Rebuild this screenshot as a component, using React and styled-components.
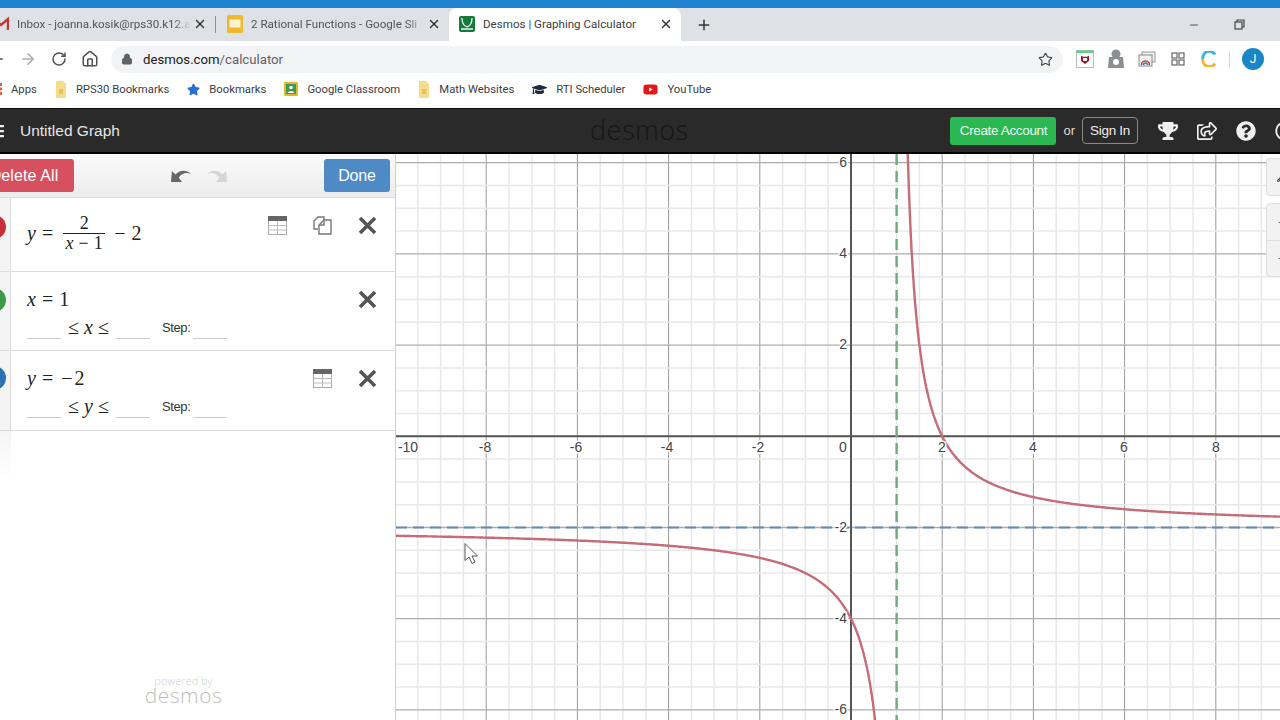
import React from "react";
import styled, { createGlobalStyle } from "styled-components";
import { ArrowLeft, ArrowRight, RotateCw, Home, Lock, Star, Plus, X, Minus } from "lucide-react";
import { FaBars, FaTrophy, FaQuestionCircle, FaRegCircle, FaStar, FaGraduationCap, FaYoutube, FaRegShareSquare, FaWrench } from "react-icons/fa";

const GlobalStyle = createGlobalStyle`
  html, body {
    margin: 0;
    padding: 0;
    background: white;
    overflow: hidden;
  }
  * {
    box-sizing: border-box;
  }
`;

const GmailIcon = () => (
  <svg width="16" height="16" viewBox="0 0 16 16">
    <path d="M1 3v11M1 3l7 6 7-6v11" fill="none" stroke="#c5392c" strokeWidth="2.4" />
  </svg>
);

const SlidesIcon = () => (
  <svg width="16" height="18" viewBox="0 0 16 18">
    <rect x="0" y="0" width="16" height="18" rx="1.5" fill="#f0b92b" />
    <rect x="2.5" y="4.5" width="11" height="8" fill="#fdf4d3" />
  </svg>
);

const DesmosIcon = () => (
  <svg width="16" height="16" viewBox="0 0 16 16">
    <rect width="16" height="16" rx="2" fill="#157a3c" />
    <path d="M3 2c0 5 2 8 5 9 3-1 5-4 5-9M2 13h12" fill="none" stroke="#e8f5ec" strokeWidth="1.3" />
  </svg>
);

const FolderIcon = () => (
  <svg width="12" height="17" viewBox="0 0 12 17">
    <path d="M1 0h7l3 3v14H1z" fill="#f6dc8a" />
    <rect x="4" y="8" width="4" height="5" fill="#e6c25f" />
  </svg>
);

const AppsIcon = () => (
  <svg width="12" height="12" viewBox="0 0 12 12" fill="#d8663c">
    <rect x="9" y="0" width="3" height="3" />
    <rect x="9" y="4.5" width="3" height="3" />
    <rect x="9" y="9" width="3" height="3" />
    <rect x="4" y="4" width="3" height="3" />
  </svg>
);

const ClassroomIcon = () => (
  <svg width="14" height="14" viewBox="0 0 14 14">
    <rect width="14" height="14" rx="1" fill="#e3b92c" />
    <rect x="2" y="2" width="10" height="10" fill="#3d9a50" />
    <circle cx="7" cy="5.5" r="1.8" fill="#fff" />
    <path d="M3.5 11c.5-2.4 6.5-2.4 7 0z" fill="#fff" />
  </svg>
);

const McAfeeIcon = () => (
  <svg width="18" height="18" viewBox="0 0 18 18">
    <rect x=".5" y=".5" width="17" height="17" fill="#fff" stroke="#bbb" />
    <rect x=".5" y=".5" width="17" height="2.5" fill="#5fd08b" />
    <path d="M5 5.5l2 1.2h4l2-1.2V11l-4 3-4-3z" fill="#a3172c" />
    <rect x="7" y="8" width="4" height="3" fill="#fff" />
  </svg>
);

const BadgeIcon = () => (
  <svg width="18" height="20" viewBox="0 0 18 20" fill="#8c8f92">
    <circle cx="9" cy="5" r="4.5" />
    <path d="M2 8h14l1 11H1z" />
    <circle cx="9" cy="13" r="3" fill="#fff" />
  </svg>
);

const CastIcon = () => (
  <svg width="18" height="16" viewBox="0 0 18 16">
    <rect x="4" y="1" width="13" height="10" fill="#eee" stroke="#999" />
    <rect x="1" y="4" width="13" height="11" fill="#f5f5f5" stroke="#888" />
    <path d="M3.5 14a4 4 0 0 1 8 0" fill="none" stroke="#d1483b" strokeWidth="1.6" />
    <path d="M5.5 14a2 2 0 0 1 4 0" fill="none" stroke="#3c7bd1" strokeWidth="1.6" />
  </svg>
);

const GridIcon = () => (
  <svg width="14" height="14" viewBox="0 0 14 14" fill="none" stroke="#666" strokeWidth="1.2">
    <rect x="1" y="1" width="5" height="5" />
    <rect x="8" y="1" width="5" height="5" />
    <rect x="1" y="8" width="5" height="5" />
    <rect x="8" y="8" width="5" height="5" />
  </svg>
);

const CIcon = () => (
  <svg width="16" height="16" viewBox="0 0 16 16" fill="none" strokeWidth="3">
    <path d="M14 3.5A6.5 6.5 0 0 0 2 8" stroke="#3cb6d8" />
    <path d="M2 8a6.5 6.5 0 0 0 12 4.5" stroke="#f2b632" />
  </svg>
);

const RestoreIcon = () => (
  <svg width="11" height="11" viewBox="0 0 11 11" fill="none" stroke="#444" strokeWidth="1.2">
    <rect x="1" y="3" width="7" height="7" />
    <path d="M3 3V1h7v7H8" />
  </svg>
);

const TableIcon = () => (
  <svg width="19" height="19" viewBox="0 0 19 19">
    <rect x=".5" y=".5" width="18" height="18" fill="#fff" stroke="#aaa" />
    <rect x="0" y="0" width="19" height="5" fill="#666" />
    <path d="M0 9.5h19M0 14h19M9.5 5v14" stroke="#bbb" />
  </svg>
);

const CopyIcon = () => (
  <svg width="19" height="20" viewBox="0 0 19 20" fill="none" stroke="#777" strokeWidth="1.4">
    <path d="M5 14H1V6l4-4h6v3" />
    <path d="M11 5h7v14H6v-9z" />
    <path d="M6 10h5V5" />
  </svg>
);

const CloseIcon = () => (
  <svg width="19" height="19" viewBox="0 0 19 19" fill="none" stroke="#555" strokeWidth="3.6">
    <path d="M2 2l15 15M17 2L2 17" />
  </svg>
);

const UndoIcon = ({ color, flip }) => (
  <svg width="20" height="14" viewBox="0 0 22 14" preserveAspectRatio="none" fill={color} style={flip ? { transform: "scaleX(-1)" } : undefined}>
    <path d="M0 13L1 2l4 3.6C9 1.5 16 0 22 5c-5.500-2-10-.6-13.500 3.400L12 13z" />
  </svg>
);

const Root = styled.div`
  width: 1280px;
  height: 720px;
  overflow: hidden;
  display: flex;
  flex-direction: column;
  font-family: "Roboto", "Liberation Sans", sans-serif;
`;

const BlueBar = styled.div`
  height: 8px;
  flex: none;
  background: #1f83d0;
`;

const TabStrip = styled.div`
  height: 33px;
  flex: none;
  display: flex;
  align-items: stretch;
  background: #dee1e6;
`;

const Tab = styled.div`
  width: 232px;
  flex: none;
  display: flex;
  align-items: center;
  padding: 0 8px 1px 10px;
  gap: 8px;
  font-size: 11.6px;
  color: ${(p) => (p.$active ? "#3c4043" : "#50555a")};
  background: ${(p) => (p.$active ? "white" : "transparent")};
  border-radius: 8px 8px 0 0;
  margin-left: ${(p) => p.$offset || 0}px;
`;

const TabTitle = styled.span`
  flex: 1;
  overflow: hidden;
  white-space: nowrap;
  ${(p) =>
    p.$fade &&
    `
    -webkit-mask-image: linear-gradient(to right, black 90%, transparent);
    mask-image: linear-gradient(to right, black 90%, transparent);
  `}
`;

const TabClose = styled.span`
  display: flex;
  flex: none;
  margin-left: -6px;
  color: #333;
`;

const TabDivider = styled.div`
  width: 1px;
  height: 17px;
  align-self: center;
  margin-right: 1px;
  flex: none;
  background: #8f9296;
`;

const NewTab = styled.div`
  display: flex;
  align-items: center;
  margin-left: 15px;
  color: #333;
`;

const WindowControls = styled.div`
  margin-left: auto;
  display: flex;
  align-items: center;
  gap: 34px;
  padding-right: 35px;
`;

const Toolbar = styled.div`
  height: 35px;
  flex: none;
  display: flex;
  align-items: center;
  background: white;
  margin-left: -19px;
`;

const NavButton = styled.div`
  width: 31px;
  flex: none;
  display: flex;
  justify-content: center;
  color: ${(p) => (p.$dim ? "#a9acb0" : "#4d5156")};
`;

const Omnibox = styled.div`
  width: 952px;
  height: 27px;
  margin-left: 6px;
  margin-top: 1px;
  flex: none;
  display: flex;
  align-items: center;
  padding: 0 10px 0 10px;
  background: #f1f3f4;
  border-radius: 14px;
`;

const Url = styled.span`
  margin-left: 10px;
  font-size: 13.2px;
  color: #202124;
  span {
    color: #5f6368;
  }
`;

const OmniStar = styled.span`
  margin-left: auto;
  display: flex;
  color: #444;
`;

const Extensions = styled.div`
  display: flex;
  align-items: center;
  flex: none;
  margin-left: 6px;
`;

const Extension = styled.div`
  width: 31px;
  display: flex;
  justify-content: center;
`;

const ToolbarSep = styled.div`
  width: 1px;
  height: 16px;
  margin: 0 12px 0 5px;
  background: #d5d7da;
`;

const Avatar = styled.div`
  width: 22px;
  height: 22px;
  border-radius: 50%;
  display: flex;
  align-items: center;
  justify-content: center;
  background: #1a86c8;
  color: white;
  font-size: 12px;
`;

const Bookmarks = styled.div`
  height: 32px;
  flex: none;
  display: flex;
  align-items: center;
  gap: 18px;
  margin-left: -10px;
  padding-bottom: 6px;
  background: white;
  font-size: 11.3px;
  color: #3c4043;
`;

const Bookmark = styled.div`
  display: flex;
  align-items: center;
  gap: 9px;
  white-space: nowrap;
`;

const Header = styled.header`
  height: 46px;
  flex: none;
  position: relative;
  display: flex;
  align-items: center;
  background: #2a2a2a;
  border-top: 1px solid #111;
  border-bottom: 2px solid #000;
  color: #eee;
`;

const Burger = styled.span`
  display: flex;
  margin-left: -11px;
  font-size: 16px;
  color: #eee;
`;

const GraphTitle = styled.span`
  margin-left: 15px;
  font-family: "Liberation Sans", sans-serif;
  font-size: 15.5px;
  color: #e6e6e6;
`;

const HeaderLogo = styled.span`
  position: absolute;
  left: 590px;
  top: 2px;
  font-family: "Open Sans", sans-serif;
  font-size: 27px;
  letter-spacing: 0.5px;
  font-weight: 300;
  color: #161616;
`;

const HeaderRight = styled.div`
  margin-left: auto;
  display: flex;
  align-items: center;
  font-family: "Liberation Sans", sans-serif;
  font-size: 13.5px;
  margin-right: -15px;
`;

const CreateButton = styled.div`
  width: 106px;
  height: 28px;
  display: flex;
  align-items: center;
  justify-content: center;
  border-radius: 3px;
  background: #2bb751;
  color: #eefaf1;
  letter-spacing: -0.35px;
`;

const Or = styled.span`
  margin: 0 7px 0 7px;
  font-size: 13px;
  color: #ddd;
`;

const SignIn = styled.div`
  width: 56px;
  height: 27px;
  display: flex;
  align-items: center;
  justify-content: center;
  border: 1px solid #888;
  border-radius: 4px;
  color: #eee;
  letter-spacing: -0.3px;
`;

const HeaderIcons = styled.div`
  display: flex;
  align-items: center;
  margin-left: 20px;
  gap: 19px;
  font-size: 20px;
  color: #efefef;
  svg {
    display: block;
  }
`;

const Main = styled.main`
  flex: 1;
  min-height: 0;
  display: flex;
`;

const Sidebar = styled.aside`
  width: 396px;
  flex: none;
  display: flex;
  flex-direction: column;
  border-right: 1px solid #cfcfcf;
  background: white;
`;

const ListTools = styled.div`
  height: 44px;
  flex: none;
  display: flex;
  align-items: center;
  padding: 0 5px 0 0;
  background: linear-gradient(#fbfbfb, #ececec);
  border-bottom: 1px solid #ddd;
  font-family: "Liberation Sans", sans-serif;
`;

const DeleteAll = styled.div`
  width: 100px;
  height: 33px;
  margin-left: -26px;
  display: flex;
  align-items: center;
  justify-content: center;
  border-radius: 3px;
  background: #d7505f;
  color: white;
  font-size: 16px;
  letter-spacing: 0.1px;
`;

const History = styled.div`
  display: flex;
  align-items: center;
  gap: 16px;
  margin-left: 97px;
`;

const DoneButton = styled.div`
  width: 66px;
  height: 33px;
  margin-left: auto;
  display: flex;
  align-items: center;
  justify-content: center;
  border-radius: 3px;
  background: #4e8ac6;
  color: white;
  font-size: 16px;
  letter-spacing: -0.2px;
`;

const ExprRow = styled.div`
  height: ${(p) => p.$height}px;
  flex: none;
  display: flex;
  border-bottom: 1px solid #ddd;
`;

const Gutter = styled.div`
  width: 11px;
  flex: none;
  overflow: hidden;
  background: #f4f4f4;
  border-right: 1px solid #ddd;
`;

const FadedGutter = styled.div`
  width: 11px;
  flex: none;
  background: linear-gradient(#f5f5f5, white);
`;

const Dot = styled.div`
  width: 24px;
  height: 24px;
  margin: ${(p) => p.$top}px 0 0 -18px;
  border-radius: 50%;
  background: ${(p) => p.$color};
`;

const ExprBody = styled.div`
  flex: 1;
  display: flex;
  flex-direction: column;
  padding: ${(p) => p.$top}px 18px 0 16px;
`;

const ExprLine = styled.div`
  display: flex;
  align-items: center;
  min-height: 24px;
`;

const Math = styled.div`
  display: flex;
  align-items: center;
  font-family: "Liberation Serif", serif;
  font-size: 20px;
  color: #222;
  white-space: pre;
  i {
    font-style: italic;
  }
`;

const Op = styled.span`
  margin: 0 ${(p) => p.$space ?? 6}px 0 ${(p) => p.$space ?? 6}px;
`;

const Fraction = styled.div`
  display: inline-flex;
  flex-direction: column;
  align-items: center;
  margin: 0 3px 0 4px;
  font-size: 18px;
  line-height: 19px;
`;

const FracTop = styled.span`
  width: 42px;
  text-align: center;
  border-bottom: 1px solid #222;
`;

const Actions = styled.div`
  margin-left: auto;
  margin-top: ${(p) => p.$top || 0}px;
  align-self: ${(p) => (p.$top ? "flex-start" : "center")};
  display: flex;
  align-items: center;
  gap: 26px;
`;

const Bounds = styled.div`
  display: flex;
  align-items: flex-end;
  margin-top: 5px;
  height: 23px;
`;

const Blank = styled.span`
  width: 34px;
  height: 100%;
  border-bottom: 1px solid #ccc;
  flex: none;
`;

const BoundMath = styled(Math)`
  width: 55px;
  justify-content: center;
  align-self: center;
`;

const StepLabel = styled.span`
  margin-left: 12px;
  align-self: center;
  font-family: "Liberation Sans", sans-serif;
  font-size: 13px;
  letter-spacing: -0.4px;
  color: #333;
  width: 31px;
`;

const ListEnd = styled.div`
  height: 50px;
  flex: none;
  display: flex;
`;

const Powered = styled.div`
  margin-top: auto;
  margin-bottom: 17px;
  margin-right: 28px;
  display: flex;
  flex-direction: column;
  align-items: center;
  font-family: "Open Sans", sans-serif;
  font-weight: 300;
`;

const PoweredBy = styled.span`
  font-size: 11px;
  line-height: 12px;
  color: #d0d0d0;
`;

const PoweredLogo = styled.span`
  font-size: 21px;
  line-height: 16px;
  letter-spacing: 0.5px;
  color: #bdbdbd;
`;

const GraphArea = styled.div`
  position: relative;
  flex: 1;
  min-width: 0;
  overflow: hidden;
  background: white;
`;

const GraphSvg = styled.svg`
  display: block;
`;

const GraphLabel = styled.text`
  font-family: "Liberation Sans", sans-serif;
  font-size: 14px;
  fill: #444;
  stroke: white;
  stroke-width: 3px;
  paint-order: stroke;
  dominant-baseline: central;
`;

const GraphControls = styled.div`
  position: absolute;
  top: 4px;
  right: -14px;
  display: flex;
  flex-direction: column;
  gap: 7px;
`;

const ControlGroup = styled.div`
  width: 28px;
  border: 1px solid #ddd;
  border-radius: 4px;
  background: #f2f2f2;
  display: flex;
  flex-direction: column;
`;

const ControlButton = styled.div`
  height: 36px;
  display: flex;
  align-items: center;
  padding-left: 10px;
  color: #555;
  font-size: 10px;
  & + & {
    border-top: 1px solid #ddd;
  }
`;

const W = 884;
const H = 566;
const ORIGIN_X = 455;
const ORIGIN_Y = 282.3;
const SCALE_X = 45.6;
const SCALE_Y = 45.6;
const px = (x) => ORIGIN_X + SCALE_X * x;
const py = (y) => ORIGIN_Y - SCALE_Y * y;
const curveY = (x) => 2 / (x - 1) - 2;

const range = (from, to, step) => {
  const out = [];
  for (let v = from; v <= to + 1e-9; v += step) out.push(v);
  return out;
};

const curvePath = (from, to) =>
  range(from, to, 0.01)
    .map((x, i) => `${i ? "L" : "M"}${px(x).toFixed(1)} ${py(curveY(x)).toFixed(1)}`)
    .join("");

const xLabels = [
  [-10, 12],
  [-8, 89],
  [-6, 180],
  [-4, 271],
  [-2, 362],
  [0, 447],
  [2, 546],
  [4, 637],
  [6, 728],
  [8, 820],
];

const Graph = () => (
  <GraphSvg width={W} height={H} viewBox={`0 0 ${W} ${H}`}>
    {range(-10, 9.5, 0.5).map((v) => (
      <line key={v} x1={px(v)} x2={px(v)} y1="0" y2={H} stroke={v % 2 === 0 ? "#9a9a9a" : "#e8e8e8"} strokeWidth={v % 2 === 0 ? 1 : 1.5} />
    ))}
    {range(-6.5, 6, 0.5).map((v) => (
      <line key={v} x1="0" x2={W} y1={py(v)} y2={py(v)} stroke={v % 2 === 0 ? "#adadad" : "#e8e8e8"} strokeWidth={v % 2 === 0 ? 1.3 : 1.5} />
    ))}
    <line x1={px(0)} x2={px(0)} y1="0" y2={H} stroke="#555" strokeWidth="2" />
    <line x1="0" x2={W} y1={py(0)} y2={py(0)} stroke="#555" strokeWidth="2" />

    <line x1="0" x2={W} y1={py(-2)} y2={py(-2)} stroke="#5c8dbd" strokeWidth="2.2" strokeDasharray="11 6" />
    <line x1={px(1)} x2={px(1)} y1="0" y2={H} stroke="#6dab7f" strokeWidth="2.4" strokeDasharray="11 6" />
    <path d={curvePath(-10, 0.53)} fill="none" stroke="#c56c78" strokeWidth="2.4" />
    <path d={curvePath(1.24, 9.42)} fill="none" stroke="#c56c78" strokeWidth="2.4" />

    {xLabels.map(([v, x]) => (
      <GraphLabel key={v} x={x} y="293" textAnchor="middle">
        {v}
      </GraphLabel>
    ))}
    {[6, 4, 2, -2, -4, -6].map((v) => (
      <GraphLabel key={v} x="451" y={py(v) - 1} textAnchor="end">
        {v}
      </GraphLabel>
    ))}

    <path d="M69 389.500v17l4-3.500 3 6.500 3-1.500-3-6h5.500z" fill="white" stroke="#555" strokeWidth="1" />
  </GraphSvg>
);

const BoundsRow = ({ variable }) => (
  <Bounds>
    <Blank />
    <BoundMath>
      ≤ <i>{variable}</i> ≤
    </BoundMath>
    <Blank />
    <StepLabel>Step:</StepLabel>
    <Blank />
  </Bounds>
);

export default function App() {
  return (
    <Root>
      <GlobalStyle />
      <BlueBar />
      <TabStrip>
        <Tab $offset={-17}>
          <GmailIcon />
          <TabTitle $fade>Inbox - joanna.kosik@rps30.k12.a</TabTitle>
          <TabClose>
            <X size={14} strokeWidth={2.4} />
          </TabClose>
        </Tab>
        <TabDivider />
        <Tab>
          <SlidesIcon />
          <TabTitle $fade>2 Rational Functions - Google Sli</TabTitle>
          <TabClose>
            <X size={14} strokeWidth={2.4} />
          </TabClose>
        </Tab>
        <Tab $active>
          <DesmosIcon />
          <TabTitle>Desmos | Graphing Calculator</TabTitle>
          <TabClose>
            <X size={14} strokeWidth={2.4} />
          </TabClose>
        </Tab>
        <NewTab>
          <Plus size={16} strokeWidth={2.2} />
        </NewTab>
        <WindowControls>
          <Minus size={12} color="#555" />
          <RestoreIcon />
        </WindowControls>
      </TabStrip>

      <Toolbar>
        <NavButton>
          <ArrowLeft size={18} />
        </NavButton>
        <NavButton $dim>
          <ArrowRight size={18} />
        </NavButton>
        <NavButton>
          <RotateCw size={16} strokeWidth={2.2} />
        </NavButton>
        <NavButton>
          <Home size={18} />
        </NavButton>
        <Omnibox>
          <Lock size={12} color="#5f6368" fill="#5f6368" />
          <Url>
            desmos.com<span>/calculator</span>
          </Url>
          <OmniStar>
            <Star size={15} strokeWidth={1.8} />
          </OmniStar>
        </Omnibox>
        <Extensions>
          <Extension>
            <McAfeeIcon />
          </Extension>
          <Extension>
            <BadgeIcon />
          </Extension>
          <Extension>
            <CastIcon />
          </Extension>
          <Extension>
            <GridIcon />
          </Extension>
          <Extension>
            <CIcon />
          </Extension>
          <ToolbarSep />
          <Avatar>J</Avatar>
        </Extensions>
      </Toolbar>

      <Bookmarks>
        <Bookmark>
          <AppsIcon />
          Apps
        </Bookmark>
        <Bookmark>
          <FolderIcon />
          RPS30 Bookmarks
        </Bookmark>
        <Bookmark>
          <FaStar size={13} color="#2a6fd0" />
          Bookmarks
        </Bookmark>
        <Bookmark>
          <ClassroomIcon />
          Google Classroom
        </Bookmark>
        <Bookmark>
          <FolderIcon />
          Math Websites
        </Bookmark>
        <Bookmark>
          <FaGraduationCap size={15} color="#1f2a3c" />
          RTI Scheduler
        </Bookmark>
        <Bookmark>
          <FaYoutube size={15} color="#e01818" />
          YouTube
        </Bookmark>
      </Bookmarks>

      <Header>
        <Burger>
          <FaBars />
        </Burger>
        <GraphTitle>Untitled Graph</GraphTitle>
        <HeaderLogo>desmos</HeaderLogo>
        <HeaderRight>
          <CreateButton>Create Account</CreateButton>
          <Or>or</Or>
          <SignIn>Sign In</SignIn>
          <HeaderIcons>
            <FaTrophy />
            <FaRegShareSquare />
            <FaQuestionCircle />
            <FaRegCircle />
          </HeaderIcons>
        </HeaderRight>
      </Header>

      <Main>
        <Sidebar>
          <ListTools>
            <DeleteAll>Delete All</DeleteAll>
            <History>
              <UndoIcon color="#666" />
              <UndoIcon color="#d5d5d5" flip />
            </History>
            <DoneButton>Done</DoneButton>
          </ListTools>

          <ExprRow $height={74}>
            <Gutter>
              <Dot $top={17} $color="#c7303a" />
            </Gutter>
            <ExprBody $top={16}>
              <ExprLine>
                <Math>
                  <i>y</i>
                  <Op>=</Op>
                  <Fraction>
                    <FracTop>2</FracTop>
                    <span>
                      <i>x</i>
                      <Op $space={5}>−</Op>1
                    </span>
                  </Fraction>
                  <Op>−</Op>2
                </Math>
                <Actions $top={1}>
                  <TableIcon />
                  <CopyIcon />
                  <CloseIcon />
                </Actions>
              </ExprLine>
            </ExprBody>
          </ExprRow>

          <ExprRow $height={79}>
            <Gutter>
              <Dot $top={16} $color="#3d9a46" />
            </Gutter>
            <ExprBody $top={15}>
              <ExprLine>
                <Math>
                  <i>x</i>
                  <Op>=</Op>1
                </Math>
                <Actions>
                  <CloseIcon />
                </Actions>
              </ExprLine>
              <BoundsRow variable="x" />
            </ExprBody>
          </ExprRow>

          <ExprRow $height={80}>
            <Gutter>
              <Dot $top={15} $color="#2d70b3" />
            </Gutter>
            <ExprBody $top={15}>
              <ExprLine>
                <Math>
                  <i>y</i>
                  <Op>=</Op>
                  <Op $space={2}>−</Op>2
                </Math>
                <Actions>
                  <TableIcon />
                  <CloseIcon />
                </Actions>
              </ExprLine>
              <BoundsRow variable="y" />
            </ExprBody>
          </ExprRow>

          <ListEnd>
            <FadedGutter />
          </ListEnd>

          <Powered>
            <PoweredBy>powered by</PoweredBy>
            <PoweredLogo>desmos</PoweredLogo>
          </Powered>
        </Sidebar>

        <GraphArea>
          <Graph />
          <GraphControls>
            <ControlGroup>
              <ControlButton>
                <FaWrench />
              </ControlButton>
            </ControlGroup>
            <ControlGroup>
              <ControlButton>
                <Plus size={9} />
              </ControlButton>
              <ControlButton>
                <Minus size={9} />
              </ControlButton>
            </ControlGroup>
          </GraphControls>
        </GraphArea>
      </Main>
    </Root>
  );
}
